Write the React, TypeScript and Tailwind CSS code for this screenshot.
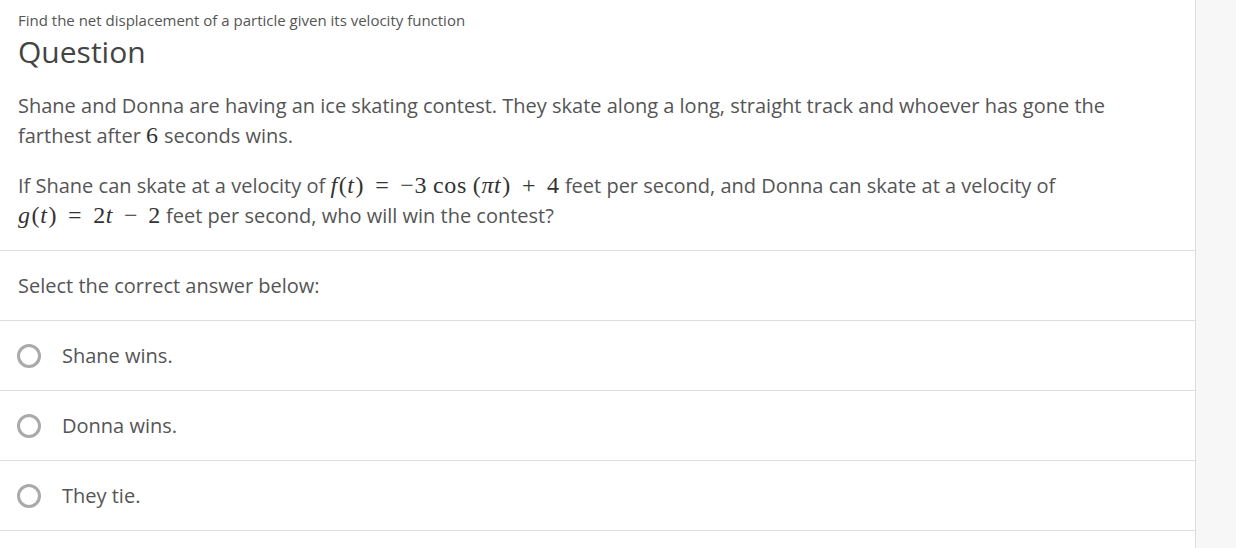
import React from 'react';

const OPTIONS = ['Shane wins.', 'Donna wins.', 'They tie.'];

// KaTeX-like inline math pieces
const M: React.FC<{ children: React.ReactNode }> = ({ children }) => (
  <span className="font-['Liberation_Serif','DejaVu_Serif',serif] text-[24px] leading-[1] tracking-[0.6px] text-[#333] whitespace-nowrap">{children}</span>
);
const V: React.FC<{ children: React.ReactNode }> = ({ children }) => <i className="pr-[1px]">{children}</i>;

const App: React.FC = () => {
  return (
    <div className="flex min-h-screen h-[548px] bg-white font-['Open_Sans','Noto_Sans',sans-serif] text-[#555]">
      {/* Main column */}
      <main className="w-[1196px] shrink-0 border-r border-[#ddd]">
        <div className="px-[18px] pt-[10px] pb-[19px]">
          <div className="text-[15px] leading-[20px] text-[#555]">Find the net displacement of a particle given its velocity function</div>
          <h1 className="mt-[3px] text-[30px] leading-[38px] text-[#444]">Question</h1>

          <p className="mt-[20px] w-[1140px] text-[20px] leading-[30px]">
            Shane and Donna are having an ice skating contest. They skate along a long, straight track and whoever has gone the farthest after <M>6</M> seconds wins.
          </p>

          <p className="mt-[20px] w-[1140px] text-[20px] leading-[30px]">
            If Shane can skate at a velocity of{' '}
            <M>
              <V>f</V>(<V>t</V>)<span className="mx-[11px]">=</span>−3<span className="ml-[6px]">cos</span><span className="ml-[6px]">(</span><V>πt</V>)<span className="mx-[11px]">+</span>4
            </M>{' '}
            feet per second, and Donna can skate at a velocity of{' '}
            <M>
              <V>g</V>(<V>t</V>)<span className="mx-[11px]">=</span>2<V>t</V><span className="mx-[10px]">−</span>2
            </M>{' '}
            feet per second, who will win the contest?
          </p>
        </div>

        <div className="h-[70px] border-t border-[#ddd] flex items-center px-[18px] text-[20px]">
          Select the correct answer below:
        </div>

        {OPTIONS.map((opt) => (
          <label key={opt} className="h-[70px] border-t border-[#ddd] flex items-center pl-[17px] text-[20px] cursor-pointer">
            <span className="w-[24px] h-[24px] rounded-full border-[3px] border-[#aaa] bg-white shrink-0" />
            <span className="ml-[21px]">{opt}</span>
          </label>
        ))}
        <div className="border-t border-[#ddd]" />
      </main>

      {/* Right rail */}
      <aside className="flex-1 bg-[#f7f7f7]" />
    </div>
  );
};

export default App;
